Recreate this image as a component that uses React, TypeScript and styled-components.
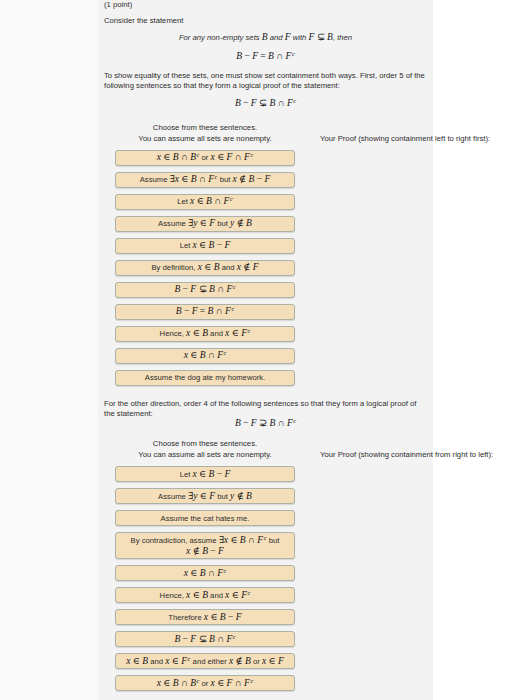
import styled, { createGlobalStyle } from "styled-components";
import type { ReactNode } from "react";

const GlobalStyle = createGlobalStyle`
  body {
    margin: 0;
    background: #ffffff;
    font-family: "Liberation Sans", Arial, sans-serif;
    color: #2e2e2e;
  }
`;

const Page = styled.div`
  display: flex;
  min-height: 700px;
`;

const Gutter = styled.div`
  flex: none;
  width: 98px;
  background: #fafafa;
`;

const Panel = styled.main`
  flex: none;
  box-sizing: border-box;
  width: 335px;
  padding: 0 6px;
  background: #f3f3f3;
  font-size: 7.7px;
`;

const Para = styled.p<{ $top: number; $lh?: number }>`
  margin: ${(p) => p.$top}px 0 0;
  line-height: ${(p) => p.$lh ?? 10}px;
`;

const Display = styled.div<{ $top: number; $lh?: number }>`
  margin-top: ${(p) => p.$top}px;
  line-height: ${(p) => p.$lh ?? 12}px;
  text-align: center;
`;

const Lead = styled.span`
  font-style: italic;
`;

const Sorter = styled.section<{ $top: number }>`
  display: grid;
  grid-template-columns: 180px 1fr;
  column-gap: 25px;
  margin: ${(p) => p.$top}px 0 0 11px;
`;

const ColumnHead = styled.div`
  line-height: 11px;
  text-align: center;
`;

const ProofHead = styled.div`
  align-self: end;
  line-height: 11px;
  white-space: nowrap;
`;

const CardList = styled.div`
  display: flex;
  flex-direction: column;
  gap: 6px;
  margin-top: 6px;
`;

const Card = styled.div`
  box-sizing: border-box;
  width: 180px;
  padding: 1.5px 6px;
  line-height: 11px;
  text-align: center;
  background: #f5dfba;
  border: 1px solid #a9b3a6;
  border-radius: 3px;
  box-shadow: 0 1px 1px rgba(0, 0, 0, 0.12);
`;

const Formula = styled.span`
  font-family: "Liberation Serif", "DejaVu Serif", serif;
  font-size: 1.24em;
  line-height: 0;
  color: #161616;
  white-space: nowrap;
`;

const V = styled.i`
  font-style: italic;
  font-weight: 500;
`;

const Op = styled.span<{ $tight?: boolean }>`
  font-style: normal;
  margin: 0 ${(p) => (p.$tight ? 0 : 0.25)}em;
`;

const Sup = styled.sup`
  font-style: italic;
  font-size: 0.68em;
  line-height: 0;
  vertical-align: 0.5em;
  margin-left: 0.08em;
`;

const OPS = "∈∉∩−=⊊⊋∃";

function formula(src: string) {
  const out: ReactNode[] = [];
  for (let i = 0; i < src.length; i++) {
    const ch = src[i];
    if (ch === " ") continue;
    if (ch === "^") {
      out.push(<Sup key={i}>{src[i + 1]}</Sup>);
      i++;
      continue;
    }
    if (OPS.includes(ch)) {
      out.push(
        <Op key={i} $tight={ch === "∃"}>
          {ch}
        </Op>
      );
      continue;
    }
    out.push(<V key={i}>{ch}</V>);
  }
  return out;
}

// "$...$" marks math inside a sentence
function rich(s: string) {
  return s.split("$").map((part, i) =>
    i % 2 ? <Formula key={i}>{formula(part)}</Formula> : part
  );
}

const firstCards = [
  "$x ∈ B ∩ B^c$ or $x ∈ F ∩ F^c$",
  "Assume $∃x ∈ B ∩ F^c$ but $x ∉ B − F$",
  "Let $x ∈ B ∩ F^c$",
  "Assume $∃y ∈ F$ but $y ∉ B$",
  "Let $x ∈ B − F$",
  "By definition, $x ∈ B$ and $x ∉ F$",
  "$B − F ⊊ B ∩ F^c$",
  "$B − F = B ∩ F^c$",
  "Hence, $x ∈ B$ and $x ∈ F^c$",
  "$x ∈ B ∩ F^c$",
  "Assume the dog ate my homework.",
];

const secondCards = [
  "Let $x ∈ B − F$",
  "Assume $∃y ∈ F$ but $y ∉ B$",
  "Assume the cat hates me.",
  "By contradiction, assume $∃x ∈ B ∩ F^c$ but $x ∉ B − F$",
  "$x ∈ B ∩ F^c$",
  "Hence, $x ∈ B$ and $x ∈ F^c$",
  "Therefore $x ∈ B − F$",
  "$B − F ⊊ B ∩ F^c$",
  "$x ∈ B$ and $x ∈ F^c$ and either $x ∉ B$ or $x ∈ F$",
  "$x ∈ B ∩ B^c$ or $x ∈ F ∩ F^c$",
];

const SortBlock = ({ top, proofLabel, cards }: { top: number; proofLabel: string; cards: string[] }) => (
  <Sorter $top={top}>
    <ColumnHead>
      Choose from these sentences.
      <br />
      You can assume all sets are nonempty.
    </ColumnHead>
    <ProofHead>{proofLabel}</ProofHead>
    <CardList>
      {cards.map((c) => (
        <Card key={c}>{rich(c)}</Card>
      ))}
    </CardList>
    <div />
  </Sorter>
);

export default function App() {
  return (
    <>
      <GlobalStyle />
      <Page>
        <Gutter />
        <Panel>
          <Para $top={0}>(1 point)</Para>
          <Para $top={5.5}>Consider the statement</Para>
          <Display $top={6.5}>
            <Lead>{rich("For any non-empty sets $B$ and $F$ with $F ⊊ B$, then")}</Lead>
          </Display>
          <Display $top={7}>{rich("$B − F = B ∩ F^c$")}</Display>
          <Para $top={7.75} $lh={10.5}>
            To show equality of these sets, one must show set containment both ways. First, order 5 of the
            following sentences so that they form a logical proof of the statement:
          </Para>
          <Display $top={6.25}>{rich("$B − F ⊊ B ∩ F^c$")}</Display>
          <SortBlock
            top={11.8}
            proofLabel="Your Proof (showing containment left to right first):"
            cards={firstCards}
          />
          <Para $top={13}>
            For the other direction, order 4 of the following sentences so that they form a logical proof of
            the statement:
          </Para>
          <Display $top={0} $lh={10}>
            {rich("$B − F ⊋ B ∩ F^c$")}
          </Display>
          <SortBlock
            top={9.5}
            proofLabel="Your Proof (showing containment from right to left):"
            cards={secondCards}
          />
        </Panel>
      </Page>
    </>
  );
}
